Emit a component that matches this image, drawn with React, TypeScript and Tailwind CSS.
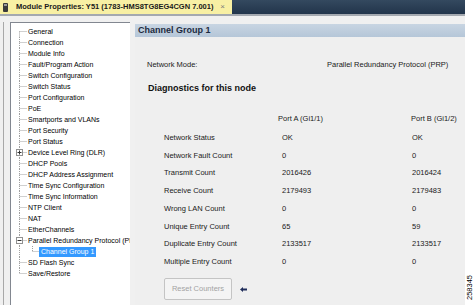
import React from "react";

type TreeKind = "item" | "first" | "last" | "plus" | "minus" | "child";

const treeItems: { label: string; kind: TreeKind }[] = [
  { label: "General", kind: "first" },
  { label: "Connection", kind: "item" },
  { label: "Module Info", kind: "item" },
  { label: "Fault/Program Action", kind: "item" },
  { label: "Switch Configuration", kind: "item" },
  { label: "Switch Status", kind: "item" },
  { label: "Port Configuration", kind: "item" },
  { label: "PoE", kind: "item" },
  { label: "Smartports and VLANs", kind: "item" },
  { label: "Port Security", kind: "item" },
  { label: "Port Status", kind: "item" },
  { label: "Device Level Ring (DLR)", kind: "plus" },
  { label: "DHCP Pools", kind: "item" },
  { label: "DHCP Address Assignment", kind: "item" },
  { label: "Time Sync Configuration", kind: "item" },
  { label: "Time Sync Information", kind: "item" },
  { label: "NTP Client", kind: "item" },
  { label: "NAT", kind: "item" },
  { label: "EtherChannels", kind: "item" },
  { label: "Parallel Redundancy Protocol (PRP)", kind: "minus" },
  { label: "Channel Group 1", kind: "child" },
  { label: "SD Flash Sync", kind: "item" },
  { label: "Save/Restore", kind: "last" },
];

const rows = [
  { label: "Network Status", a: "OK", b: "OK" },
  { label: "Network Fault Count", a: "0", b: "0" },
  { label: "Transmit Count", a: "2016426", b: "2016424" },
  { label: "Receive Count", a: "2179493", b: "2179483" },
  { label: "Wrong LAN Count", a: "0", b: "0" },
  { label: "Unique Entry Count", a: "65", b: "59" },
  { label: "Duplicate Entry Count", a: "2133517", b: "2133517" },
  { label: "Multiple Entry Count", a: "0", b: "0" },
];

function Connector({ kind }: { kind: TreeKind }) {
  const dot = { stroke: "#a0a0a0", strokeDasharray: "1 1", strokeWidth: 1 };
  const top = kind === "first" ? 5.5 : 0;
  const bottom = kind === "last" ? 5.5 : 11;
  const w = kind === "child" ? 28 : 16;
  return (
    <svg width={w} height={11} className="shrink-0">
      <line x1={8.5} y1={top} x2={8.5} y2={bottom} {...dot} />
      {kind !== "child" && <line x1={8.5} y1={5.5} x2={16} y2={5.5} {...dot} />}
      {kind === "child" && (
        <>
          <line x1={21.5} y1={0} x2={21.5} y2={5.5} {...dot} />
          <line x1={21.5} y1={5.5} x2={28} y2={5.5} {...dot} />
        </>
      )}
      {(kind === "plus" || kind === "minus") && (
        <>
          <rect x={5.5} y={2.5} width={6} height={6} fill="#fff" stroke="#919191" />
          <line x1={6.5} y1={5.5} x2={10.5} y2={5.5} stroke="#333" />
          {kind === "plus" && <line x1={8.5} y1={3.5} x2={8.5} y2={7.5} stroke="#333" />}
        </>
      )}
    </svg>
  );
}

export default function App() {
  return (
    <div className="flex h-[305px] w-[474px] overflow-hidden bg-white text-black [font-family:'Liberation_Sans',Arial,sans-serif]">
      <div className="flex w-[465px] flex-col">
        <div className="flex h-[14px] shrink-0">
          <div className="flex w-[232px] items-center bg-[#f8f0a4]">
            <svg width={5} height={9} className="ml-[3px] shrink-0">
              <rect x={0} y={0} width={5} height={9} rx={1} fill="#3a3a3a" />
              <rect x={1} y={1} width={3} height={2} fill="#9a9a9a" />
            </svg>
            <span className="ml-[8px] whitespace-nowrap text-[7.5px] font-bold leading-none text-[#1a1a1a]">
              Module Properties: Y51 (1783-HMS8TG8EG4CGN 7.001)
            </span>
            <span className="ml-auto mr-[7px] text-[8px] leading-none text-[#7a7a7a]">×</span>
          </div>
          <div className="w-[233px] bg-gradient-to-b from-[#34495f] to-[#22354b]" />
        </div>
        <div className="h-[2px] shrink-0 bg-[#a4a9b0]" />
        <div className="flex flex-1 bg-[#f0f0f0] pt-[6px]">
          <div className="ml-[3px] w-px bg-[#a8a8a8]" />
          <div className="ml-[6px] w-[120px] overflow-hidden border-l border-t border-[#828790] bg-white pt-[3px]">
            {treeItems.map((item) => (
              <div key={item.label} className="flex h-[11px] items-center overflow-hidden whitespace-nowrap text-[7px] leading-[11px]">
                <Connector kind={item.kind} />
                {item.kind === "child" ? (
                  <span className="bg-[#3399ff] px-[2px] leading-[10px] text-white">{item.label}</span>
                ) : (
                  <span className="ml-[1px]">{item.label}</span>
                )}
              </div>
            ))}
          </div>
          <div className="ml-[5px] mt-[2px] flex flex-1 flex-col bg-[#efefef]">
            <div className="flex h-[13px] items-center bg-gradient-to-b from-[#c8d5e2] to-[#b5c6d8] pl-[3px] text-[9px] font-bold text-[#1c2a40]">
              Channel Group 1
            </div>
            <div className="flex flex-col pt-[23px] text-[7.5px] text-[#1a1a1a]">
              <div className="flex h-[10px] items-center">
                <span className="ml-[12px] w-[180px]">Network Mode:</span>
                <span>Parallel Redundancy Protocol (PRP)</span>
              </div>
              <div className="ml-[13px] mt-[13px] flex h-[12px] items-center text-[9px] font-bold text-[#111]">
                Diagnostics for this node
              </div>
              <div className="mt-[19px] flex h-[10px] items-center">
                <span className="ml-[143px] w-[133px]">Port A (Gi1/1)</span>
                <span>Port B (Gi1/2)</span>
              </div>
              <div className="mt-[4.5px] flex flex-col">
                {rows.map((r) => (
                  <div key={r.label} className="flex h-[17.75px] items-center">
                    <span className="ml-[29px] w-[118px]">{r.label}</span>
                    <span className="w-[130px]">{r.a}</span>
                    <span>{r.b}</span>
                  </div>
                ))}
              </div>
              <div className="ml-[29px] mt-[7.5px] flex items-center">
                <button
                  type="button"
                  disabled
                  className="h-[22px] w-[68px] rounded-[2px] border border-[#c4c4c4] bg-[#f4f4f4] text-[7.5px] text-[#a3a3a3]"
                >
                  Reset Counters
                </button>
                <svg width={7} height={5} className="ml-[8px]">
                  <path d="M0 2.5 L3 0 L3 1.5 L7 1.5 L7 3.5 L3 3.5 L3 5 Z" fill="#1f2d5a" />
                </svg>
              </div>
            </div>
          </div>
        </div>
      </div>
      <div className="relative flex-1 bg-white">
        <span className="absolute bottom-[5px] left-[1px] rotate-180 text-[7.5px] leading-none text-black [writing-mode:vertical-rl]">
          258345
        </span>
      </div>
    </div>
  );
}
